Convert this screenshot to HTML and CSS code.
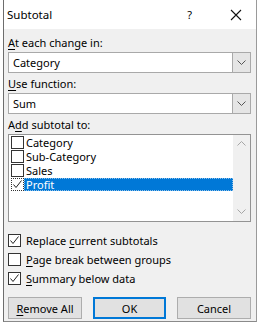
FILE: index.html
```html
<!DOCTYPE html>
<html>
<head>
<meta charset="utf-8">
<title>Subtotal</title>
<link rel="stylesheet" href="styles.css">
</head>
<body>
<div class="dialog">
	<div class="titlebar">
		<span class="title">Subtotal</span>
		<span class="help">?</span>
		<svg class="close" width="12" height="12" viewBox="0 0 12 12"><path d="M1 1L11 11M11 1L1 11" stroke="#111" stroke-width="1.1" fill="none"/></svg>
	</div>
	<div class="body">
		<div class="label lbl-first"><u>A</u>t each change in:</div>
		<div class="combo">
			<span class="combo-text">Category</span>
			<span class="combo-btn"><svg width="9" height="5" viewBox="0 0 9 5"><path d="M0.5 0.5L4.5 4.5L8.5 0.5" stroke="#555" fill="none"/></svg></span>
		</div>
		<div class="label"><u>U</u>se function:</div>
		<div class="combo">
			<span class="combo-text">Sum</span>
			<span class="combo-btn"><svg width="9" height="5" viewBox="0 0 9 5"><path d="M0.5 0.5L4.5 4.5L8.5 0.5" stroke="#555" fill="none"/></svg></span>
		</div>
		<div class="label">A<u>d</u>d subtotal to:</div>
		<div class="listbox">
			<div class="items">
				<div class="item"><span class="box"></span><span class="item-text">Category</span></div>
				<div class="item"><span class="box"></span><span class="item-text">Sub-Category</span></div>
				<div class="item"><span class="box"></span><span class="item-text">Sales</span></div>
				<div class="item selected"><span class="box focus"><svg width="11" height="11" viewBox="0 0 11 11"><path d="M1.5 5.5L4 8.5L9.5 1.5" stroke="#222" fill="none"/></svg></span><span class="item-text">Profit</span></div>
			</div>
			<div class="scrollbar">
				<svg width="9" height="5" viewBox="0 0 9 5"><path d="M0.5 4.5L4.5 0.5L8.5 4.5" stroke="#a6a6a6" fill="none"/></svg>
				<svg width="9" height="5" viewBox="0 0 9 5"><path d="M0.5 0.5L4.5 4.5L8.5 0.5" stroke="#a6a6a6" fill="none"/></svg>
			</div>
		</div>
		<div class="options">
			<div class="option"><span class="cbox"><svg width="11" height="11" viewBox="0 0 11 11"><path d="M1.5 5.5L4 8.5L9.5 1.5" stroke="#222" fill="none"/></svg></span><span>Replace <u>c</u>urrent subtotals</span></div>
			<div class="option"><span class="cbox"></span><span><u>P</u>age break between groups</span></div>
			<div class="option"><span class="cbox"><svg width="11" height="11" viewBox="0 0 11 11"><path d="M1.5 5.5L4 8.5L9.5 1.5" stroke="#222" fill="none"/></svg></span><span><u>S</u>ummary below data</span></div>
		</div>
		<div class="buttons">
			<button class="btn"><u>R</u>emove All</button>
			<button class="btn default">OK</button>
			<button class="btn">Cancel</button>
		</div>
	</div>
</div>
</body>
</html>
```
FILE: styles.css
```css
html, body {
	margin: 0;
}
body {
	background: #fff;
	font-family: "Noto Sans", "Liberation Sans", sans-serif;
	font-size: 11px;
	color: #000;
	width: 260px;
	height: 331px;
	overflow: hidden;
}

.dialog {
	margin-left: 3px;
	width: 254px;
	height: 322px;
	border-left: 1px solid #6d6d6d;
	border-right: 1px solid #9a9a9a;
	border-bottom: 1px solid #8a8a8a;
	box-sizing: border-box;
	display: flex;
	flex-direction: column;
}

.titlebar {
	height: 29px;
	background: #fff;
	display: flex;
	align-items: center;
	padding-left: 3px;
	flex: none;
}
.title {
	flex: 1;
	font-size: 11.5px;
}
.help {
	font-size: 11px;
	margin-right: 38px;
}
.close {
	margin-right: 14px;
}

.body {
	flex: 1;
	background: #f0f0f0;
	padding: 6px 5px 0 4px;
}

.label {
	line-height: 16px;
	height: 16px;
	margin-top: 3px;
	margin-bottom: 1px;
}
.lbl-first {
	margin-top: 0;
}
.label u, .option u, .btn u {
	text-decoration-thickness: 1px;
	text-underline-offset: 2px;
}

.combo {
	height: 21px;
	background: #fff;
	border: 1px solid #a9a9a9;
	box-sizing: border-box;
	display: flex;
	align-items: center;
}
.combo-text {
	flex: 1;
	padding-left: 4px;
}
.combo-btn {
	width: 17px;
	height: 19px;
	background: #e5e5e5;
	border-left: 1px solid #a9a9a9;
	display: flex;
	align-items: center;
	justify-content: center;
}

.listbox {
	height: 88px;
	background: #fff;
	border: 1px solid #939393;
	box-sizing: border-box;
	display: flex;
}
.items {
	flex: 1;
}
.item {
	height: 14px;
	display: flex;
	align-items: center;
	padding-left: 2px;
}
.box {
	width: 13px;
	height: 13px;
	border: 1px solid #333;
	box-sizing: border-box;
	background: #fff;
	flex: none;
	display: flex;
	align-items: center;
	justify-content: center;
}
.box.focus {
	border: 1px dotted #333;
}
.item-text {
	flex: 1;
	line-height: 13px;
	height: 13px;
	padding-left: 2px;
}
.selected .item-text {
	background: #0078d7;
	color: #fff;
	outline: 1px dotted #8ec0ea;
	outline-offset: -1px;
}
.scrollbar {
	width: 17px;
	background: #f0f0f0;
	display: flex;
	flex-direction: column;
	align-items: center;
	justify-content: space-between;
	padding: 6px 0 7px;
	box-sizing: border-box;
}

.options {
	margin-top: 12px;
	display: flex;
	flex-direction: column;
	gap: 6px;
}
.option {
	height: 13px;
	line-height: 13px;
	display: flex;
	align-items: center;
	gap: 5px;
}
.cbox {
	width: 13px;
	height: 13px;
	border: 1px solid #333;
	box-sizing: border-box;
	background: #fff;
	flex: none;
	display: flex;
	align-items: center;
	justify-content: center;
}

.buttons {
	margin-top: 12px;
	display: flex;
	justify-content: space-between;
}
.btn {
	width: 74px;
	height: 22px;
	font-family: inherit;
	font-size: 11px;
	background: #e1e1e1;
	border: 1px solid #adadad;
	padding: 0;
	color: #000;
}
.btn.default {
	border: 2px solid #0078d7;
	width: 73px;
}
```
